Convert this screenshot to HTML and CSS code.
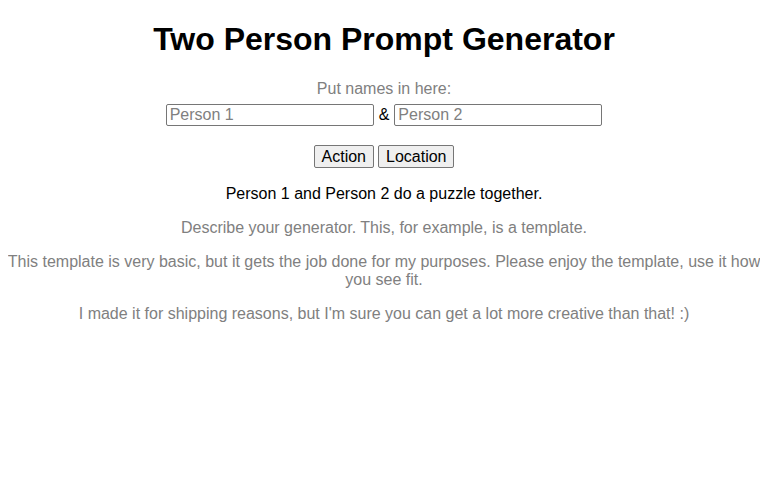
FILE: index.html
```html
<!DOCTYPE html>
<html lang="en">
<head>
  <meta charset="UTF-8">
  <title>Two Person Prompt Generator</title>
  <meta name="viewport" content="width=device-width, initial-scale=1.0">
  <link rel="stylesheet" href="styles.css">
</head>
<body>
<div class="generator">

  <h1>Two Person Prompt Generator</h1>

  <!-- Names -->
  <div class="names">
    <p class="hint">Put names in here:</p>
    <div class="name-row">
      <input type="text" id="person1" placeholder="Person 1" />
      <span class="amp">&amp;</span>
      <input type="text" id="person2" placeholder="Person 2" />
    </div>
  </div>

  <!-- Buttons -->
  <div class="actions">
    <button type="button" class="btn">Action</button>
    <button type="button" class="btn">Location</button>
  </div>

  <p id="output" class="output">Person 1 and Person 2 do a puzzle together.</p>

  <!-- Description -->
  <p class="desc">Describe your generator. This, for example, is a template.</p>
  <p class="desc">This template is very basic, but it gets the job done for my purposes. Please enjoy the template, use it how you see fit.</p>
  <p class="desc">I made it for shipping reasons, but I'm sure you can get a lot more creative than that! :)</p>

</div>
</body>
</html>
```

FILE: styles.css
```css
body {
  margin: 0 8px;
  font-family: "Liberation Sans", Arial, sans-serif;
  font-size: 16px;
  background: #ffffff;
  color: #000;
}

.generator {
  text-align: center;
  padding-top: 21px;
}

.generator h1 {
  font-size: 32px;
  margin: 0 0 22px;
}

.hint {
  margin: 0;
  color: #808080;
  line-height: 18px;
}

.name-row {
  display: flex;
  justify-content: center;
  align-items: center;
  gap: 4px;
  margin-top: 6px;
}

.name-row input {
  width: 208px;
  height: 22px;
  box-sizing: border-box;
  padding: 1px 3px;
  border: 1px solid #767676;
  border-radius: 2px;
  font-family: inherit;
  font-size: 16px;
}

.name-row input::placeholder {
  color: #808080;
}

.amp {
  padding: 0 1px;
}

.actions {
  display: flex;
  justify-content: center;
  gap: 4px;
  margin-top: 19px;
}

.btn {
  height: 23px;
  padding: 1px 7px;
  border: 1px solid #767676;
  border-radius: 2px;
  background: #efefef;
  font-family: inherit;
  font-size: 16px;
  color: #000;
}

.output {
  margin: 17px 0 16px;
  line-height: 18px;
}

.desc {
  margin: 16px -6px;
  color: #808080;
  line-height: 18px;
}
```
